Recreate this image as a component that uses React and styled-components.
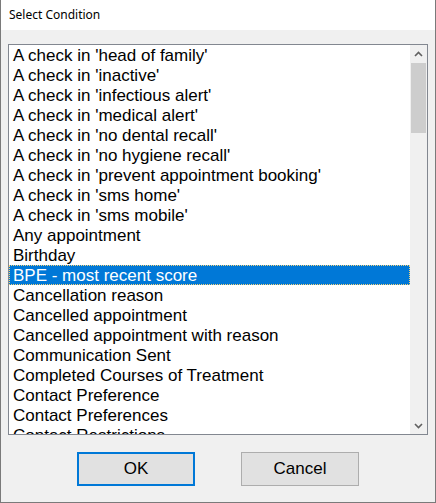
import React from "react";
import styled, { createGlobalStyle } from "styled-components";

const conditions = [
  "A check in 'head of family'",
  "A check in 'inactive'",
  "A check in 'infectious alert'",
  "A check in 'medical alert'",
  "A check in 'no dental recall'",
  "A check in 'no hygiene recall'",
  "A check in 'prevent appointment booking'",
  "A check in 'sms home'",
  "A check in 'sms mobile'",
  "Any appointment",
  "Birthday",
  "BPE - most recent score",
  "Cancellation reason",
  "Cancelled appointment",
  "Cancelled appointment with reason",
  "Communication Sent",
  "Completed Courses of Treatment",
  "Contact Preference",
  "Contact Preferences",
  "Contact Restrictions",
];

const GlobalStyle = createGlobalStyle`
  html, body {
    margin: 0;
    padding: 0;
    background: #ffffff;
  }
  * {
    box-sizing: border-box;
  }
`;

export default function App() {
  return (
    <>
      <GlobalStyle />
      <DialogWindow>
        <TitleBar>Select Condition</TitleBar>
        <DialogBody>
          <ListBox>
            <ListItems>
              {conditions.map((label, i) => (
                <ListItem key={label} $selected={i === 11}>
                  {label}
                </ListItem>
              ))}
            </ListItems>
            <ScrollBar>
              <ScrollButton>
                <svg width="9" height="6" viewBox="0 0 9 6">
                  <path d="M1 5 L4.5 1.5 L8 5" fill="none" stroke="#606060" strokeWidth="1.6" />
                </svg>
              </ScrollButton>
              <ScrollTrack>
                <ScrollThumb />
              </ScrollTrack>
              <ScrollButton>
                <svg width="9" height="6" viewBox="0 0 9 6">
                  <path d="M1 1 L4.5 4.5 L8 1" fill="none" stroke="#606060" strokeWidth="1.6" />
                </svg>
              </ScrollButton>
            </ScrollBar>
          </ListBox>
          <ButtonRow>
            <DialogButton $default>OK</DialogButton>
            <DialogButton>Cancel</DialogButton>
          </ButtonRow>
        </DialogBody>
      </DialogWindow>
    </>
  );
}

const DialogWindow = styled.div`
  width: 436px;
  height: 503px;
  display: flex;
  flex-direction: column;
  background: #f0f0f0;
  border: 1px solid #7a7a7a;
  border-top: none;
`;

const TitleBar = styled.div`
  height: 30px;
  flex: none;
  display: flex;
  align-items: center;
  padding-left: 8px;
  padding-bottom: 1px;
  background: #ffffff;
  font-family: "Noto Sans", "Open Sans", sans-serif;
  font-size: 12px;
  color: #000000;
`;

const DialogBody = styled.div`
  flex: 1;
  display: flex;
  flex-direction: column;
  padding: 14px 7px 0 7px;
`;

const ListBox = styled.div`
  height: 391px;
  display: flex;
  background: #ffffff;
  border: 1px solid #828790;
`;

const ListItems = styled.div`
  flex: 1;
  overflow: hidden;
  font-family: "Liberation Sans", Arial, sans-serif;
  font-size: 17px;
  color: #000000;
`;

const ListItem = styled.div`
  height: 20px;
  line-height: 21px;
  padding-left: 4px;
  white-space: nowrap;
  background: ${(p) => (p.$selected ? "#0078d7" : "transparent")};
  color: ${(p) => (p.$selected ? "#ffffff" : "#000000")};
  outline: ${(p) => (p.$selected ? "1px dotted #f5d27a" : "none")};
  outline-offset: -1px;
`;

const ScrollBar = styled.div`
  width: 17px;
  flex: none;
  display: flex;
  flex-direction: column;
  background: #f0f0f0;
`;

const ScrollButton = styled.div`
  height: 17px;
  flex: none;
  display: flex;
  align-items: center;
  justify-content: center;
`;

const ScrollTrack = styled.div`
  flex: 1;
  padding: 1px 1px 0 1px;
`;

const ScrollThumb = styled.div`
  height: 70px;
  background: #cdcdcd;
`;

const ButtonRow = styled.div`
  display: flex;
  justify-content: center;
  gap: 46px;
  margin-top: 17px;
`;

const DialogButton = styled.button`
  width: 118px;
  height: 34px;
  background: #e1e1e1;
  border: ${(p) => (p.$default ? "2px solid #0078d7" : "1px solid #adadad")};
  font-family: "Liberation Sans", Arial, sans-serif;
  font-size: 17px;
  color: #000000;
  padding: 0;
`;
